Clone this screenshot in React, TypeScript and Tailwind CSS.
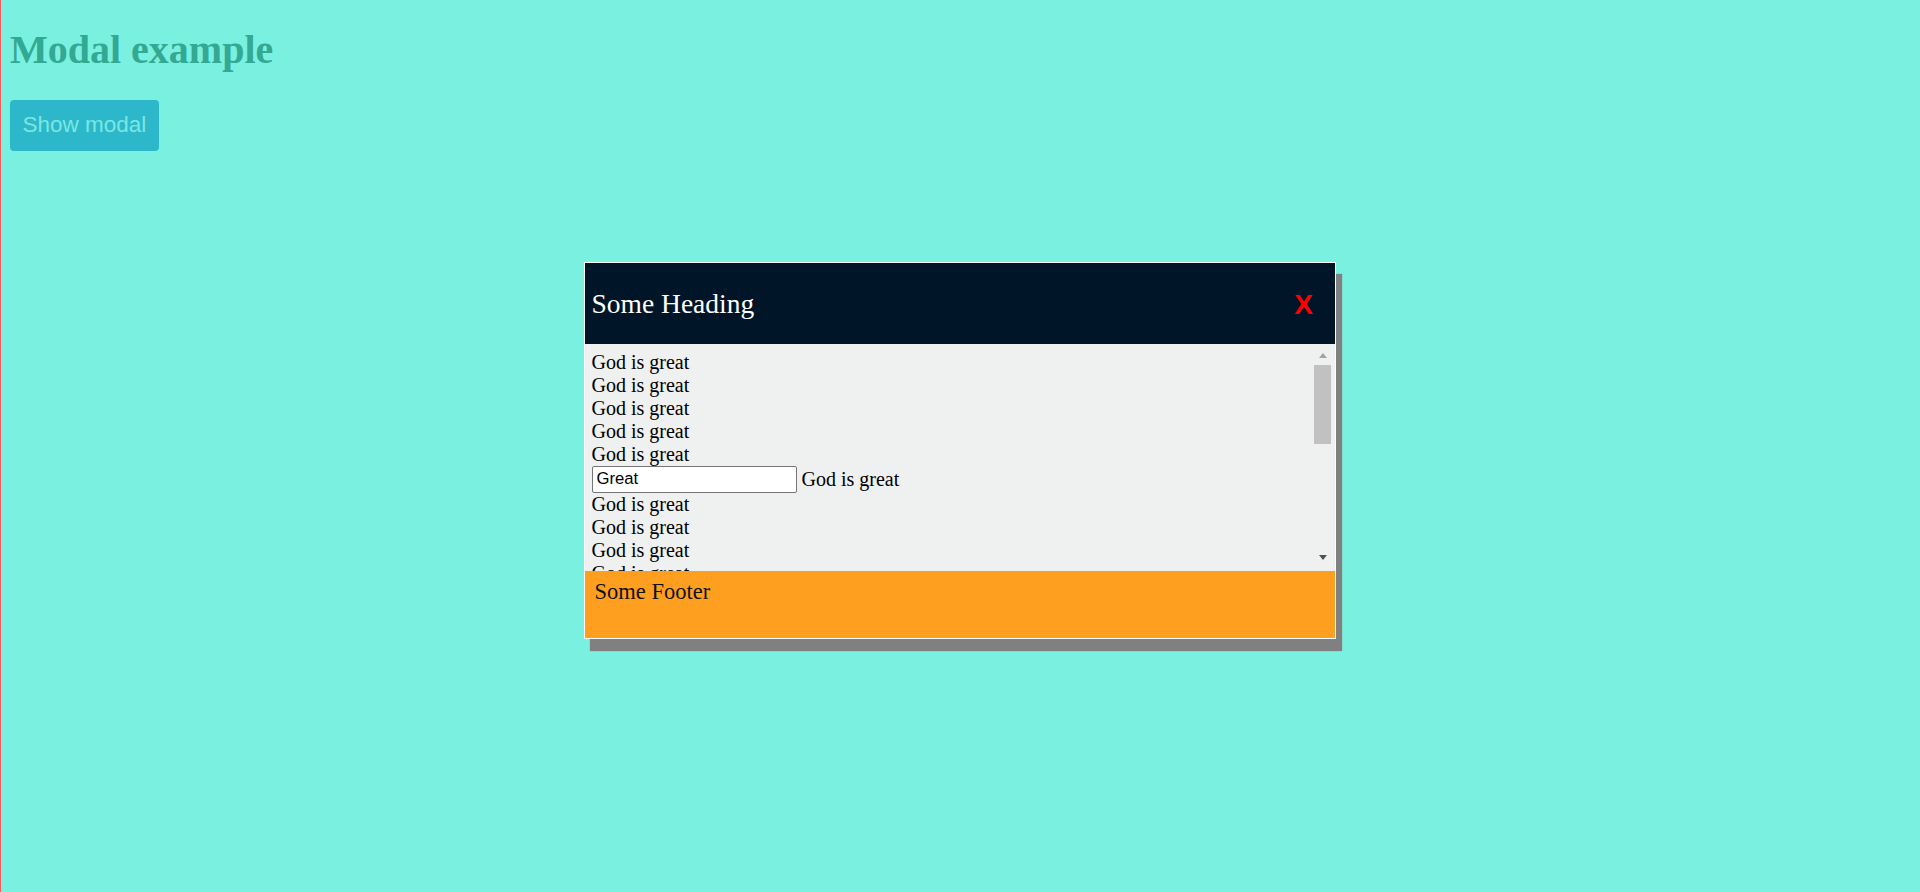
import React from "react";

const serif = "font-['Liberation_Serif','Times_New_Roman',serif]";
const sans = "font-['Liberation_Sans',Arial,sans-serif]";

function Line() {
  return <div className="h-[23px] leading-[23px]">God is great</div>;
}

export default function App() {
  const before = Array.from({ length: 5 });
  const after = Array.from({ length: 15 });
  return (
    <div className="min-h-screen bg-[#7af1e0] border-l border-[#ff5a5a] pl-[9px] pt-[10px] relative">
      <h1 className={`${serif} text-[40px] font-bold leading-[46px] text-[#33a892] mt-[17px] mb-[27px]`}>
        Modal example
      </h1>
      <button
        className={`${sans} bg-[#2db7ca] text-[#7ae8e0] text-[22.5px] leading-[26px] px-[12.5px] pt-[12px] pb-[13px] rounded-[4px]`}
      >
        Show modal
      </button>

      <div className="fixed inset-x-0 top-[262px] flex justify-center">
        <div className="w-[752px] border border-white shadow-[6px_12px_1px_#808080] flex flex-col">
          <div className="h-[81px] bg-[#001628] flex items-center justify-between pl-[6.5px] pr-[21px]">
            <div className={`${serif} text-[27.5px] leading-[32px] text-white`}>Some Heading</div>
            <div className={`${sans} text-[28px] font-bold leading-[32px] text-[#ff0000] mt-[3px] mr-[1px]`}>X</div>
          </div>
          <div className="h-[227px] bg-[#eff0f0] flex">
            <div className={`${serif} flex-1 overflow-hidden pt-[6.5px] pl-[6.5px] text-[20px] text-black`}>
              {before.map((_, i) => (
                <Line key={`b${i}`} />
              ))}
              <div className="h-[27px] flex items-center gap-[5px]">
                <input
                  defaultValue="Great"
                  className={`${sans} w-[205px] h-[27px] border border-[#767676] rounded-[2px] bg-white px-[4px] text-[16.67px] text-black outline-none`}
                />
                <span className="leading-[23px]">God is great</span>
              </div>
              {after.map((_, i) => (
                <Line key={`a${i}`} />
              ))}
            </div>
            <div className="w-[22px] flex flex-col pl-[1px]">
              <div className="w-[17px] flex justify-center mt-[9px]">
                <svg width="8" height="5" viewBox="0 0 8 5">
                  <polygon points="4,0 8,5 0,5" fill="#a3a3a3" />
                </svg>
              </div>
              <div className="w-[17px] h-[79px] bg-[#c1c1c1] mt-[7px]" />
              <div className="flex-1" />
              <div className="w-[17px] flex justify-center mb-[11.5px]">
                <svg width="8" height="5" viewBox="0 0 8 5">
                  <polygon points="0,0 8,0 4,5" fill="#505050" />
                </svg>
              </div>
            </div>
          </div>
          <div className="h-[67px] bg-[#ff9f1f] pl-[9.5px] pt-[7.5px]">
            <div className={`${serif} text-[22.5px] leading-[26px] text-[#111]`}>Some Footer</div>
          </div>
        </div>
      </div>
    </div>
  );
}
